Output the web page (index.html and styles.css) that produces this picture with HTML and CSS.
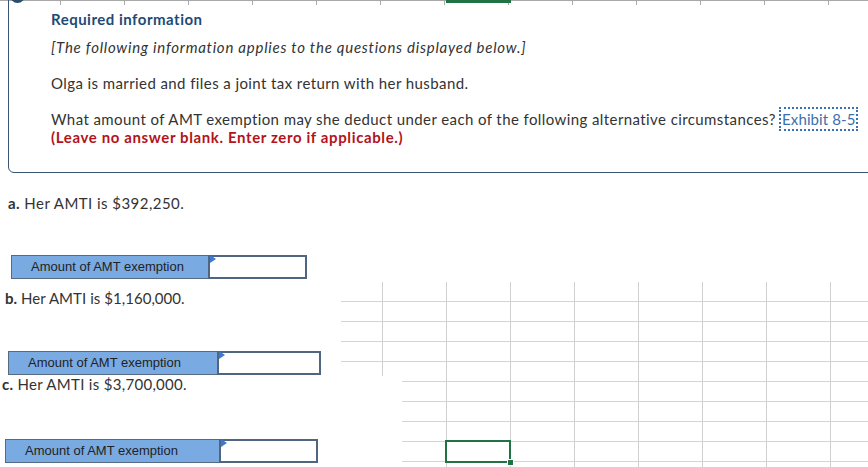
FILE: index.html
```html
<!DOCTYPE html>
<html>
<head>
<meta charset="utf-8">
<link rel="stylesheet" href="styles.css">
</head>
<body>
<div class="page">
  <div class="ruler"></div>
  <div class="grid grid-upper"></div>
  <div class="grid grid-vline"></div>
  <div class="grid grid-cols"></div>
  <div class="grid grid-lower"></div>
  <div class="cell-selected"><span class="handle"></span></div>
  <div class="qnum"></div>

  <div class="info-box">
    <p class="title">Required information</p>
    <p class="italic">[The following information applies to the questions displayed below.]</p>
    <p class="para">Olga is married and files a joint tax return with her husband.</p>
    <p class="para">What amount of AMT exemption may she deduct under each of the following alternative circumstances? <span class="exhibit">Exhibit 8-5</span><br><span class="warn">(Leave no answer blank. Enter zero if applicable.)</span></p>
  </div>

  <p class="part part-a"><b>a.</b> Her AMTI is $392,250.</p>
  <div class="row row-a">
    <div class="label">Amount of AMT exemption</div>
    <div class="input"><span class="flag"></span></div>
  </div>

  <p class="part part-b"><b>b.</b> Her AMTI is $1,160,000.</p>
  <div class="row row-b">
    <div class="label">Amount of AMT exemption</div>
    <div class="input"><span class="flag"></span></div>
  </div>

  <p class="part part-c"><b>c.</b> Her AMTI is $3,700,000.</p>
  <div class="row row-c">
    <div class="label">Amount of AMT exemption</div>
    <div class="input"><span class="flag"></span></div>
  </div>
</div>
</body>
</html>
```
FILE: styles.css
```css
html, body {
  margin: 0;
  padding: 0;
  background: #fff;
}
.page {
  position: relative;
  width: 868px;
  height: 467px;
  overflow: hidden;
  font-family: "Lato", "Open Sans", sans-serif;
  color: #333;
  display: flex;
  flex-direction: column;
  align-items: flex-start;
}
p { margin: 0; }

/* decorative spreadsheet background */
.ruler {
  position: absolute;
  left: 0; top: 0; right: 0;
  height: 4px;
  border-top: 1px solid #a8a8a8;
  background-image: repeating-linear-gradient(to right, transparent 0, transparent 62px, #a8a8a8 62px, #a8a8a8 63px, transparent 63px, transparent 64px);
  background-size: 64px 4px;
  background-position: 62px 0;
}
.ruler::after {
  content: "";
  position: absolute;
  left: 446px; top: -1px;
  width: 65px; height: 3px;
  background: #217346;
}
.grid { position: absolute; }
.grid-upper {
  left: 341px; top: 301px; width: 527px; height: 61px;
  background-image: repeating-linear-gradient(to bottom, #d4d4d4 0, #d4d4d4 1px, transparent 1px, transparent 20px);
}
.grid-lower {
  left: 402px; top: 381px; width: 466px; height: 86px;
  background-image: repeating-linear-gradient(to bottom, #d4d4d4 0, #d4d4d4 1px, transparent 1px, transparent 20px);
}
.grid-vline {
  left: 382px; top: 282px; width: 1px; height: 94px;
  background: #d0d0d0;
}
.grid-cols {
  left: 446px; top: 282px; width: 422px; height: 185px;
  background-image: repeating-linear-gradient(to right, #d0d0d0 0, #d0d0d0 1px, transparent 1px, transparent 64px);
}
.cell-selected {
  position: absolute;
  left: 445px; top: 440px;
  width: 62px; height: 19px;
  border: 2px solid #217346;
}
.handle {
  position: absolute;
  right: -5px; bottom: -5px;
  width: 5px; height: 5px;
  background: #217346;
  border: 1px solid #fff;
}
.qnum {
  position: absolute;
  left: 10px; top: -12px;
  width: 15px; height: 15px;
  border-radius: 50%;
  background: #2c4b6d;
}

/* info box */
.info-box {
  position: relative;
  margin: -10px 0 0 8px;
  width: 900px;
  border: 1px solid #3a5472;
  border-radius: 6px;
  padding: 19px 0 26px 42px;
  box-sizing: border-box;
  background: transparent;
}
.title {
  font-size: 15px;
  line-height: 18px;
  font-weight: 700;
  letter-spacing: 0.5px;
  color: #1f4a75;
}
.italic {
  margin-top: 10px;
  font-size: 15px;
  line-height: 18px;
  font-style: italic;
  letter-spacing: 0.75px;
}
.para {
  margin-top: 18px;
  font-size: 15px;
  line-height: 18px;
  letter-spacing: 0.41px;
}
.exhibit {
  color: #3d6fae;
  letter-spacing: 0.1px;
  outline: 2px dotted #3d6fae;
  outline-offset: 1px;
  margin-left: 2px;
}
.warn {
  color: #b3131b;
  font-weight: 700;
  letter-spacing: 0.62px;
}

/* parts */
.part {
  font-size: 15px;
  line-height: 18px;
  letter-spacing: 0.45px;
  color: #333;
}
.part b { color: #333; }
.part-a { margin: 21px 0 0 8px; }
.part-b { margin: 10px 0 0 5px; letter-spacing: 0.05px; }
.part-c { margin: 0 0 0 2px; letter-spacing: 0.3px; }

.row {
  display: flex;
  height: 24px;
}
.row-a { margin: 43px 0 0 11px; }
.row-b { margin: 44px 0 0 8px; }
.row-c { margin: 46px 0 0 5px; }

.label {
  box-sizing: border-box;
  height: 24px;
  background: #7aaae2;
  border: 1px solid #566b83;
  border-right: none;
  padding-left: 19px;
  font-family: "Liberation Sans", Arial, sans-serif;
  font-size: 13px;
  line-height: 22px;
  color: #222;
}
.row-a .label { width: 197px; }
.row-b .label { width: 209px; }
.row-c .label { width: 214px; }

.input {
  position: relative;
  box-sizing: border-box;
  height: 24px;
  background: #fff;
  border: 2px solid #4f6580;
}
.row-a .input { width: 99px; }
.row-b .input { width: 104px; }
.row-c .input { width: 99px; }
.flag {
  position: absolute;
  left: 0; top: -2px;
  width: 0; height: 0;
  border-top: 4px solid transparent;
  border-bottom: 4px solid transparent;
  border-left: 6px solid #3b7ad4;
}
```
